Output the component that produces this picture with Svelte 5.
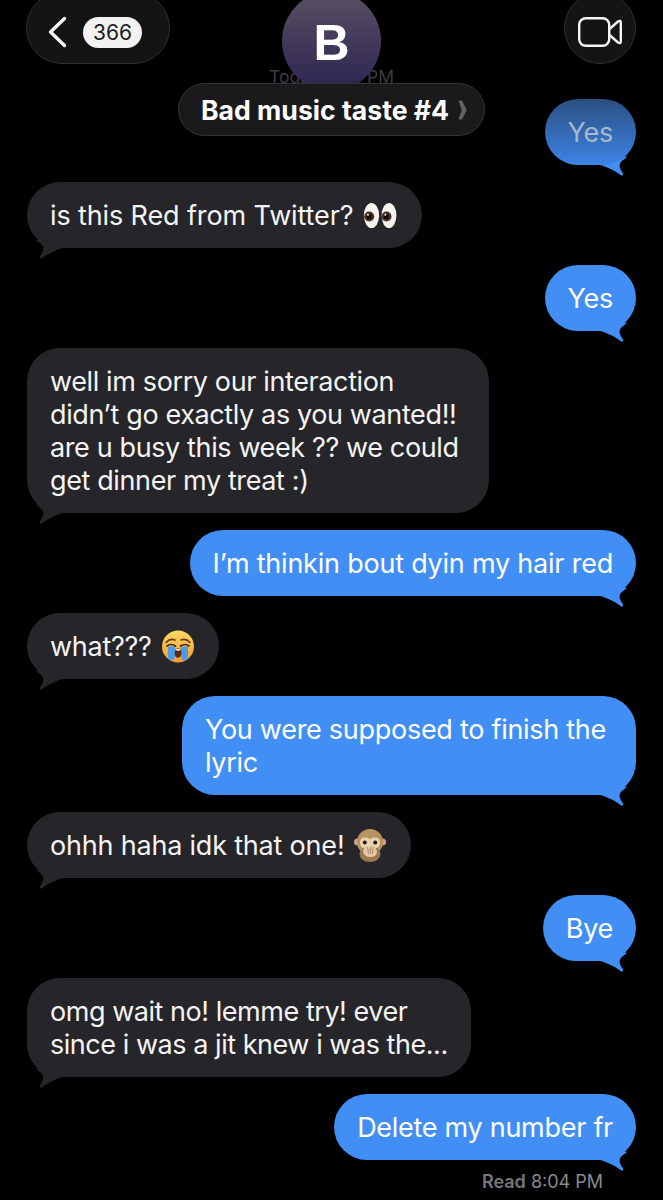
<script>
  const messages = [
    { from: 'me', lines: ['Yes'], faded: true },
    { from: 'them', track: -0.12, lines: ['is this Red from Twitter?'], emoji: 'eyes' },
    { from: 'me', lines: ['Yes'] },
    { from: 'them', track: -0.38, roomy: true, lines: ['well im sorry our interaction', 'didn’t go exactly as you wanted!!', 'are u busy this week ?? we could', 'get dinner my treat :)'] },
    { from: 'me', track: -0.22, lines: ['I’m thinkin bout dyin my hair red'] },
    { from: 'them', lines: ['what???'], emoji: 'cry' },
    { from: 'me', roomy: true, lines: ['You were supposed to finish the', 'lyric'] },
    { from: 'them', track: -0.2, lines: ['ohhh haha idk that one!'], emoji: 'monkey' },
    { from: 'me', lines: ['Bye'] },
    { from: 'them', track: -0.46, lines: ['omg wait no! lemme try! ever', 'since i was a jit knew i was the...'] },
    { from: 'me', lines: ['Delete my number fr'] }
  ]
</script>

{#snippet eyes()}
  <svg class="emoji eyes" viewBox="0 0 34 26" aria-hidden="true">
    <ellipse cx="8.500" cy="13" rx="7.600" ry="12.600" fill="#f6f3ee" />
    <ellipse cx="26" cy="13" rx="7.400" ry="12.600" fill="#f6f3ee" />
    <circle cx="6.200" cy="14" r="5" fill="#4a3020" />
    <circle cx="23.500" cy="14" r="5" fill="#4a3020" />
    <circle cx="6.200" cy="14" r="2.600" fill="#0c0806" />
    <circle cx="23.500" cy="14" r="2.600" fill="#0c0806" />
    <circle cx="5" cy="12.200" r="1" fill="#fff" />
    <circle cx="22.300" cy="12.200" r="1" fill="#fff" />
  </svg>
{/snippet}

{#snippet cry()}
  <svg class="emoji" viewBox="0 0 32 32" aria-hidden="true">
    <defs>
      <linearGradient id="cryFace" x1="0" y1="0" x2="0" y2="1">
        <stop offset="0" stop-color="#fdd865" />
        <stop offset="1" stop-color="#f59a2e" />
      </linearGradient>
    </defs>
    <circle cx="16" cy="16" r="16" fill="url(#cryFace)" />
    <path d="M4 12 Q8 7.500 13 9.500 M28 12 Q24 7.500 19 9.500" stroke="#6a3d14" stroke-width="1.600" fill="none" stroke-linecap="round" />
    <path d="M6 16 h7 v10 q-1 4 -4 4 q-3 -1 -3 -4 z M19 16 h7 v10 q0 3 -3 4 q-3 0 -4 -4 z" fill="#4c9be8" />
    <path d="M5 15.500 Q9 12.500 13.500 15.500 M18.500 15.500 Q23 12.500 27 15.500" stroke="#3d2410" stroke-width="1.700" fill="none" stroke-linecap="round" />
    <ellipse cx="16" cy="22.500" rx="3.400" ry="4.800" fill="#5b2c12" />
    <ellipse cx="16" cy="19.200" rx="2.200" ry="1" fill="#f6f0e6" />
  </svg>
{/snippet}

{#snippet monkey()}
  <svg class="emoji" viewBox="0 0 32 33" aria-hidden="true">
    <circle cx="3.500" cy="13" r="3.500" fill="#cfa48e" />
    <circle cx="28.500" cy="13" r="3.500" fill="#cfa48e" />
    <ellipse cx="16" cy="13" rx="13" ry="13" fill="#b8935f" />
    <ellipse cx="16" cy="25" rx="10.500" ry="8" fill="#9a7a50" />
    <path d="M6 14 Q6 8 11.500 8.500 Q16 9 16 11 Q16 9 20.500 8.500 Q26 8 26 14 Q26 20 16 20 Q6 20 6 14 Z" fill="#ecd3b2" />
    <circle cx="10.800" cy="13.500" r="2" fill="#1e130b" />
    <circle cx="21.200" cy="13.500" r="2" fill="#1e130b" />
    <path d="M9 21 L12.500 15.500 L15 21.500 L18 15.500 L20 16 L23 22 Q23 28 16 28 Q9 28 9 21 Z" fill="#e6c8a6" />
    <path d="M13.500 18 L14.500 25 M16.500 17.500 L16.500 25 M19 18 L18.500 25" stroke="#a8835f" stroke-width="0.900" />
  </svg>
{/snippet}

<main class="phone">
  <header class="header">
    <div class="toprow">
      <div class="back">
        <svg class="chevron" viewBox="0 0 20 32" aria-hidden="true">
          <path d="M17 2.500 L3 16 L17 29.500" />
        </svg>
        <span class="count">366</span>
      </div>
      <div class="video">
        <svg viewBox="0 0 44 30" aria-hidden="true">
          <rect x="1.200" y="1.200" width="30" height="27.600" rx="6.500" />
          <path d="M31.500 12 L40 4.500 Q42.800 2.800 42.800 5.500 V24.500 Q42.800 27.200 40 25.500 L31.500 18" />
        </svg>
      </div>
    </div>
    <div class="contact">
      <span class="today">Today 8:03 PM</span>
      <div class="avatar">B</div>
      <div class="name">
        <span>Bad music taste #4</span>
        <svg viewBox="0 0 9 20" aria-hidden="true"><path d="M0.500 0.500 L4 0.500 L8.800 10 L4 19.500 L0.500 19.500 L3.800 10 Z" /></svg>
      </div>
    </div>
  </header>

  <section class="thread">
    {#each messages as m}
      <div class="bubble {m.from}" class:faded={m.faded} class:roomy={m.roomy} style={m.track ? `letter-spacing: ${m.track}px` : undefined}>
        <div class="text">
          {#each m.lines as line, i}
            <div class="line">
              <span>{line}</span>
              {#if m.emoji && i === m.lines.length - 1}
                {#if m.emoji === 'eyes'}{@render eyes()}{/if}
                {#if m.emoji === 'cry'}{@render cry()}{/if}
                {#if m.emoji === 'monkey'}{@render monkey()}{/if}
              {/if}
            </div>
          {/each}
        </div>
        <svg class="tail" viewBox="0 0 40 30" aria-hidden="true">
          <path d="M4 18 C12 20 20 24.500 24.800 28.200 C26.400 29.400 28 27.800 26.800 26 C24.500 22.500 22.800 19.500 24 16.500 C25 14 28 12.500 31 10 L10 4 Z" />
        </svg>
      </div>
    {/each}
    <div class="receipt"><b>Read</b> 8:04 PM</div>
  </section>
</main>

<style>
  :global(body) {
    background: #000;
    margin: 0;
  }

  .phone {
    height: 1200px;
    overflow: hidden;
    position: relative;
    isolation: isolate;
    background: #000;
    color: #fff;
    font-family: Inter, "Liberation Sans", sans-serif;
  }

  .header {
    height: 99px;
  }

  .toprow {
    display: flex;
    justify-content: space-between;
    padding: 0 27px 0 26px;
    transform: translateY(-8px);
  }

  .back {
    display: flex;
    align-items: center;
    width: 144px;
    height: 72px;
    box-sizing: border-box;
    padding: 8px 0 0 20px;
    border: 1px solid #303032;
    border-radius: 36px;
    background: #141416;
  }

  .chevron {
    width: 21px;
    height: 32px;
    fill: none;
    stroke: #f4f4f4;
    stroke-width: 3.400;
    stroke-linecap: round;
    stroke-linejoin: round;
  }

  .count {
    margin-left: 15px;
    width: 59px;
    height: 31px;
    border-radius: 16px;
    background: #f2f2f2;
    color: #1a1a1a;
    font-size: 21px;
    line-height: 31px;
    text-align: center;
  }

  .video {
    display: flex;
    align-items: center;
    justify-content: center;
    width: 72px;
    height: 72px;
    box-sizing: border-box;
    padding-top: 8px;
    border: 1px solid #303032;
    border-radius: 50%;
    background: #141416;
  }

  .video svg {
    width: 44px;
    height: 30px;
    fill: none;
    stroke: #f4f4f4;
    stroke-width: 2.400;
    stroke-linejoin: round;
  }

  /* name pill and avatar sit on top of the first messages */
  .contact {
    position: absolute;
    z-index: 2;
    top: -9px;
    left: 0;
    right: 0;
    display: flex;
    flex-direction: column;
    align-items: center;
  }

  .today {
    position: absolute;
    top: 76px;
    color: #3c3c40;
    font-size: 17.500px;
    line-height: 20px;
  }

  .avatar {
    position: relative;
    width: 99px;
    height: 100px;
    border-radius: 50%;
    background: linear-gradient(#5a5064, #2c2450);
    font-family: "Liberation Sans", sans-serif;
    font-size: 50px;
    font-weight: 700;
    line-height: 104px;
    text-align: center;
  }

  .name {
    position: relative;
    display: flex;
    align-items: center;
    justify-content: space-between;
    width: 307px;
    height: 53px;
    margin-top: -8px;
    box-sizing: border-box;
    padding: 0 17px 0 22px;
    border: 1px solid #343436;
    border-radius: 27px;
    background: #1a1a1c;
    font-size: 26.600px;
    font-weight: 700;
  }

  .name svg {
    flex: none;
    width: 9px;
    height: 20px;
    fill: #626264;
  }

  .thread {
    display: flex;
    flex-direction: column;
    gap: 17px;
    padding: 0 27px;
  }

  .bubble {
    position: relative;
    padding: 16.500px 23px;
    border-radius: 33px;
    font-size: 27px;
    line-height: 33px;
    letter-spacing: -0.280px;
    white-space: nowrap;
  }

  .bubble.roomy {
    padding-right: 30px;
  }

  .bubble.them {
    align-self: flex-start;
    background: #262529;
    color: #f4f4f5;
  }

  .bubble.me {
    align-self: flex-end;
    background: #418ef5;
    color: #fff;
  }

  .bubble.faded {
    background: linear-gradient(#2c4f80, #3c84e6);
    color: #a9b8cc;
  }

  .line {
    display: flex;
    align-items: center;
    gap: 10px;
  }

  .emoji {
    width: 32px;
    height: 33px;
    margin: -4px 2px -4px 0;
  }

  .eyes {
    width: 34px;
  }

  .tail {
    position: absolute;
    z-index: -1;
    right: 0;
    bottom: -12px;
    width: 40px;
    height: 30px;
  }

  .me .tail {
    fill: #418ef5;
  }

  .them .tail {
    right: auto;
    left: 0;
    transform: scaleX(-1);
    fill: #262529;
  }

  .receipt {
    align-self: flex-end;
    margin: -7px 33px 0 0;
    color: #8a8a8e;
    font-size: 18px;
    line-height: 24px;
  }

  .receipt b {
    color: #77777b;
    font-weight: 600;
  }
</style>
